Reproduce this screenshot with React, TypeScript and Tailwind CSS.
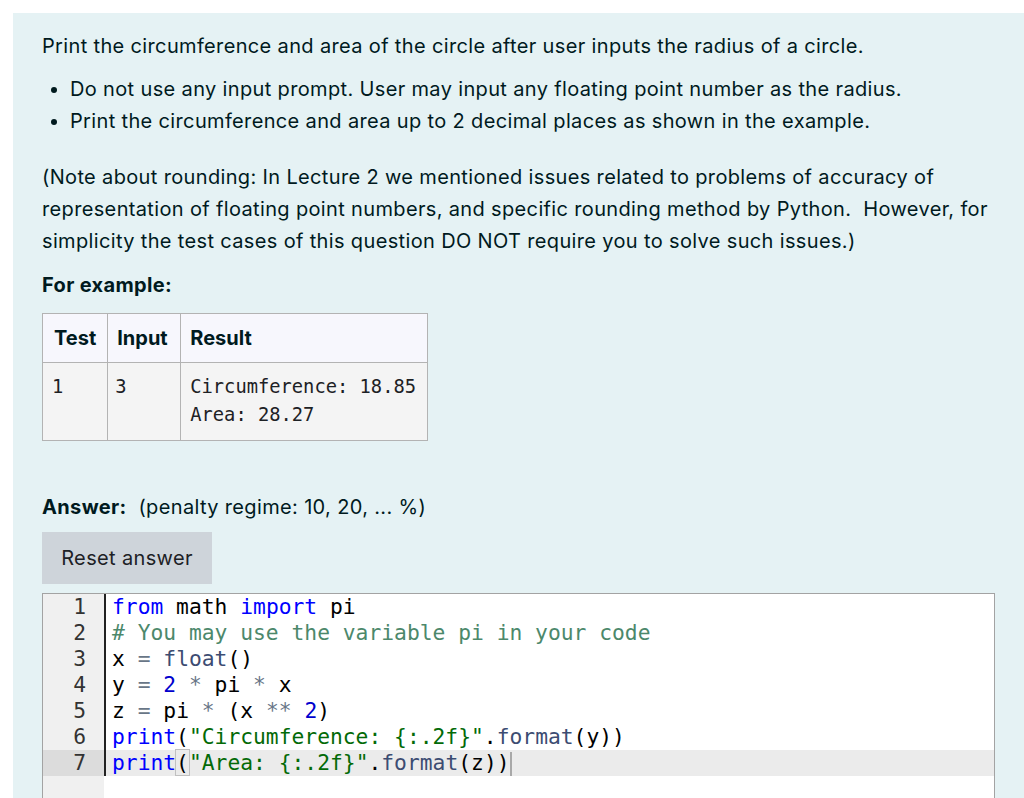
import React from 'react';

const sans = { fontFamily: 'Inter, "Noto Sans", sans-serif' };

type Tok = [string, string];

const K = 'text-[#0000ff]';
const OP = 'text-[#687687]';
const FN = 'text-[#3c4c72]';
const NUM = 'text-[#0000cd]';
const STR = 'text-[#036a07]';
const COM = 'text-[#4c886b]';
const TX = 'text-black';

const lines: Tok[][] = [
  [[K, 'from'], [TX, ' math '], [K, 'import'], [TX, ' pi']],
  [[COM, '# You may use the variable pi in your code']],
  [[TX, 'x '], [OP, '='], [TX, ' '], [FN, 'float'], [TX, '()']],
  [[TX, 'y '], [OP, '='], [TX, ' '], [NUM, '2'], [TX, ' '], [OP, '*'], [TX, ' pi '], [OP, '*'], [TX, ' x']],
  [[TX, 'z '], [OP, '='], [TX, ' pi '], [OP, '*'], [TX, ' (x '], [OP, '**'], [TX, ' '], [NUM, '2'], [TX, ')']],
  [[K, 'print'], [TX, '('], [STR, '"Circumference: {:.2f}"'], [TX, '.'], [FN, 'format'], [TX, '(y))']],
];

function CodeEditor() {
  return (
    <div
      className="flex h-[260px] border border-[#a3a3a3] bg-white text-[21.3px] leading-[26px] tracking-normal"
      style={{ fontFamily: '"DejaVu Sans Mono", monospace' }}
    >
      <div className="w-[61px] shrink-0 bg-[#f0f0f0] text-[#333]">
        {[1, 2, 3, 4, 5, 6, 7].map((n) => (
          <div key={n} className={`pr-[18px] text-right ${n === 7 ? 'bg-[#dcdcdc]' : ''}`}>
            {n}
          </div>
        ))}
      </div>
      <div className="flex-1">
        <div className="border-l-2 border-[#222]">
          {lines.map((ln, i) => (
            <div key={i} className="whitespace-pre pl-[6px]">
              {ln.map(([c, t], j) => (
                <span key={j} className={c}>
                  {t}
                </span>
              ))}
            </div>
          ))}
          <div className="whitespace-pre bg-[#ebebeb] pl-[6px]">
            <span className={K}>print</span>
            <span className="outline outline-1 outline-[#c0c0c0] text-black">(</span>
            <span className={STR}>"Area: {'{:.2f}'}"</span>
            <span className={TX}>.</span>
            <span className={FN}>format</span>
            <span className={TX}>(z))</span>
            <span className="inline-block h-[24px] w-[2px] bg-[#a8a8a8] align-middle" />
          </div>
        </div>
      </div>
    </div>
  );
}

export default function App() {
  return (
    <div className="h-[798px] overflow-hidden bg-white pl-[13px] pt-[13px]" style={sans}>
      <div className="h-full bg-[#e5f2f4] pl-[29px] pr-[29px] pt-[17px] text-[20px] leading-[32px] tracking-[0.35px] text-[#001a1e]">
        <p className="mb-[11px]">
          Print the circumference and area of the circle after user inputs the radius of a circle.
        </p>
        <ul className="mb-[24px] list-disc pl-[28px]">
          <li>Do not use any input prompt. User may input any floating point number as the radius.</li>
          <li>Print the circumference and area up to 2 decimal places as shown in the example.</li>
        </ul>
        <p className="mb-[12px]">
          (Note about rounding: In Lecture 2 we mentioned issues related to problems of accuracy of
          representation of floating point numbers, and specific rounding method by Python.&nbsp; However, for
          simplicity the test cases of this question DO NOT require you to solve such issues.)
        </p>
        <p className="mb-[12px] font-bold">For example:</p>
        <table className="mb-[50px] border-collapse">
          <thead>
            <tr className="bg-[#f7f7fd]">
              <th className="h-[49px] w-[65px] border border-[#b3b3b3] px-[11px] text-left font-bold tracking-normal">Test</th>
              <th className="w-[73px] border border-[#b3b3b3] px-[9px] text-left font-bold tracking-normal">Input</th>
              <th className="w-[247px] border border-[#b3b3b3] px-[9px] text-left font-bold tracking-normal">Result</th>
            </tr>
          </thead>
          <tbody
            className="text-[18.75px] leading-[28px] tracking-normal text-[#1d2125]"
            style={{ fontFamily: '"DejaVu Sans Mono", monospace' }}
          >
            <tr className="bg-[#f4f4f4]">
              <td className="border border-[#b3b3b3] pl-[9px] pr-[11px] pb-[11px] pt-[10px] align-top">1</td>
              <td className="border border-[#b3b3b3] pl-[7px] pr-[9px] pb-[11px] pt-[10px] align-top">3</td>
              <td className="border border-[#b3b3b3] px-[9px] pb-[11px] pt-[10px] align-top whitespace-pre">
                {'Circumference: 18.85\nArea: 28.27'}
              </td>
            </tr>
          </tbody>
        </table>
        <p className="mb-[9px]">
          <span className="font-bold">Answer:</span>&nbsp; (penalty regime: 10, 20, ... %)
        </p>
        <button className="mb-[9px] h-[52px] w-[170px] bg-[#ced4da] text-[20px] text-[#1d2125]">
          Reset answer
        </button>
        <CodeEditor />
      </div>
    </div>
  );
}
